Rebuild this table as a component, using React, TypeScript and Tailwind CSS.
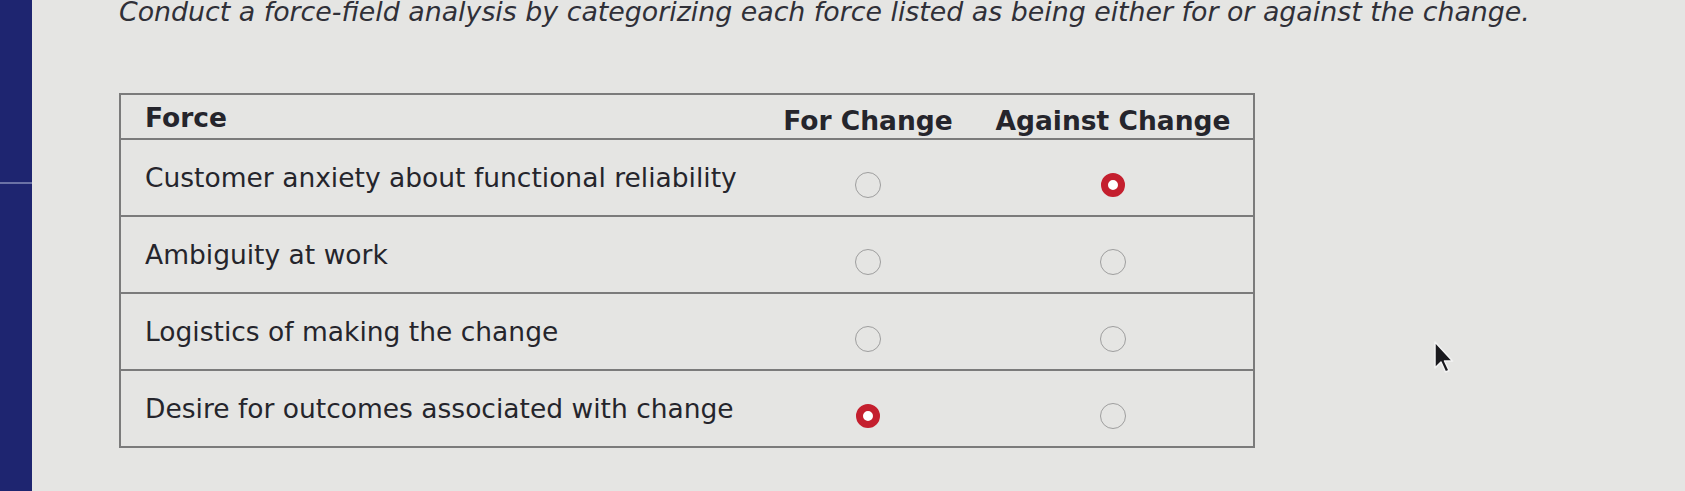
import React from "react";

const rows: { label: string; choice: "for" | "against" | null }[] = [
  { label: "Customer anxiety about functional reliability", choice: "against" },
  { label: "Ambiguity at work", choice: null },
  { label: "Logistics of making the change", choice: null },
  { label: "Desire for outcomes associated with change", choice: "for" },
];

function Radio({ checked }: { checked: boolean }) {
  return checked ? (
    <div className="w-[24px] h-[24px] rounded-full border-[7px] border-[#c41f2e] bg-white" />
  ) : (
    <div className="w-[26px] h-[26px] rounded-full border-[1.5px] border-[#9e9e9e]" />
  );
}

export default function App() {
  return (
    <div
      className="relative w-[1685px] h-[491px] overflow-hidden bg-[#e5e5e3] flex"
      style={{ fontFamily: '"DejaVu Sans", Verdana, sans-serif' }}
    >
      <div className="w-[32px] h-full bg-[#1e2570] flex flex-col">
        <div className="h-[182px]" />
        <div className="h-[2px] bg-[#6b72a6]" />
      </div>
      <div className="pl-[87px] flex flex-col">
        <div className="-mt-[1px] h-[26px] leading-[26px] text-[26.8px] italic text-[#303038] whitespace-nowrap">
          Conduct a force-field analysis by categorizing each force listed as being either for or against the change.
        </div>
        <div className="mt-[68px] w-[1136px] border-2 border-[#7b7b7b] text-[#25252c] text-[26.5px]">
          <div className="grid grid-cols-[642px_210px_1fr] h-[43px] items-center font-bold">
            <div className="pl-[24px]">Force</div>
            <div className="text-center pt-[6px]">For Change</div>
            <div className="text-center pt-[6px]">Against Change</div>
          </div>
          {rows.map((r) => (
            <div
              key={r.label}
              className="grid grid-cols-[642px_210px_1fr] h-[77px] items-center border-t-2 border-[#7b7b7b]"
            >
              <div className="pl-[24px] whitespace-nowrap">{r.label}</div>
              <div className="flex justify-center pt-[14px]">
                <Radio checked={r.choice === "for"} />
              </div>
              <div className="flex justify-center pt-[14px]">
                <Radio checked={r.choice === "against"} />
              </div>
            </div>
          ))}
        </div>
      </div>
      <svg
        className="absolute left-[1433px] top-[340px]"
        width="22"
        height="36"
        viewBox="0 0 22 36"
      >
        <path
          d="M2 2 L2 28 L8 22 L12.5 32 L16 30.5 L11.5 21 L19.5 21 Z"
          fill="#1a1a1e"
          stroke="#f4f4f4"
          strokeWidth="1.5"
          strokeLinejoin="round"
        />
      </svg>
    </div>
  );
}
